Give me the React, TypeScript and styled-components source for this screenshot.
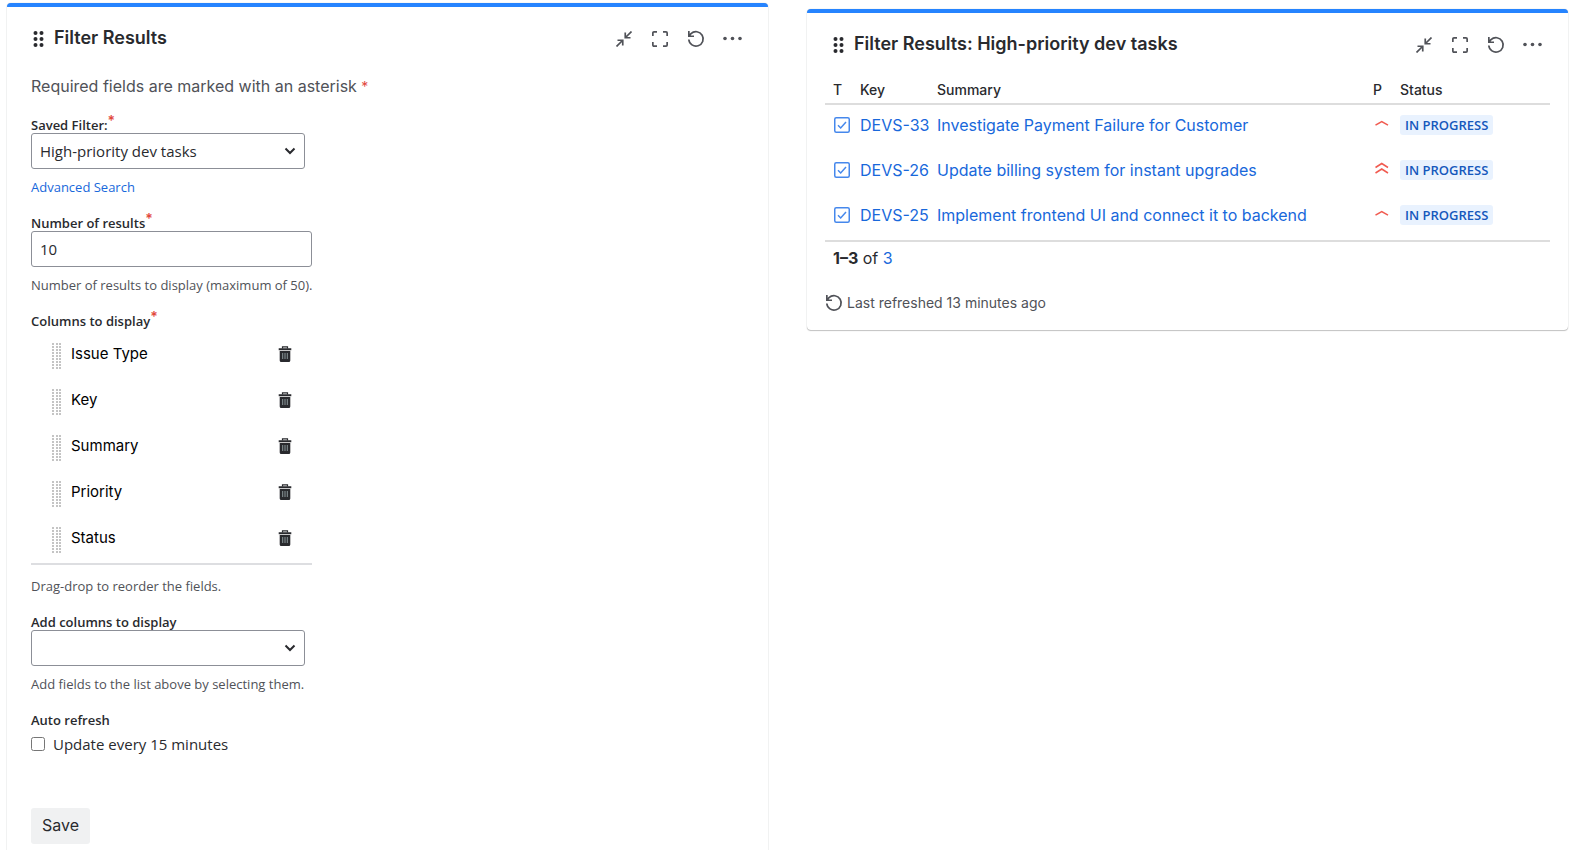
import React from 'react';
import styled, { createGlobalStyle } from 'styled-components';

const ui = `Inter, "Liberation Sans", sans-serif`;
const form = `"Open Sans", "Noto Sans", sans-serif`;

const GlobalStyle = createGlobalStyle`
  *, *::before, *::after { box-sizing: border-box; }
  body { margin: 0; background: #fff; color: #292a2e; font-family: ${ui}; font-size: 16px; line-height: 24px; }
`;

const Board = styled.main`
  display: grid;
  grid-template-columns: 1fr 1fr;
  align-items: start;
  column-gap: 39px;
  padding: 3px 12px 0 7px;
`;

const Gadget = styled.section<{ $drop?: boolean }>`
  margin-top: ${(p) => (p.$drop ? 6 : 0)}px;
  border-top: 4px solid #2684ff;
  border-radius: 4px;
  background: #fff;
  box-shadow: 0 1px 1px rgba(30, 31, 33, 0.25), 0 0 1px rgba(30, 31, 33, 0.31);
`;

const GadgetHeader = styled.header`
  display: flex;
  align-items: center;
  height: 64px;
  padding: 0 24px 0 25px;
`;

const Title = styled.h2`
  flex: 1;
  margin: 0 0 0 8px;
  padding-bottom: 2px;
  font-size: 18px;
  font-weight: 600;
  line-height: 24px;
`;

const Actions = styled.div`
  display: flex;
  gap: 12px;
`;

const IconButton = styled.button`
  display: flex;
  align-items: center;
  justify-content: center;
  width: 24px;
  height: 24px;
  padding: 0;
  border: 0;
  background: none;
  color: #505258;
  cursor: pointer;
`;

const Form = styled.form`
  padding: 3px 24px 24px;
`;

const Intro = styled.p`
  margin: 0 0 16px;
  color: #505258;
`;

const Star = styled.span`
  color: #e2483d;
  font-size: 14px;
`;

const LabelStar = styled(Star)`
  font-family: ${ui};
  line-height: 0;
  vertical-align: 4px;
`;

const Field = styled.div`
  display: flex;
  flex-direction: column;
  align-items: flex-start;
  margin-bottom: 17px;
`;

const Label = styled.label`
  padding-top: 2px;
  font: 600 13px/16px ${form};
`;

const Hint = styled.p`
  margin: 9px 0 0;
  color: #505258;
  font: 13px/18px ${form};
`;

const TextLink = styled.a`
  color: #1868db;
  text-decoration: none;
`;

const SelectBox = styled.span`
  display: grid;
  align-items: center;
  width: 274px;
  & > * { grid-area: 1 / 1; }
  & > svg { justify-self: end; margin-right: 9px; pointer-events: none; }
`;

const Select = styled.select`
  appearance: none;
  width: 100%;
  height: 36px;
  padding: 0 8px;
  border: 1px solid #8c8f97;
  border-radius: 3px;
  background: #fff;
  color: #292a2e;
  font: 15px/24px ${form};
`;

const TextInput = styled.input`
  width: 281px;
  height: 36px;
  padding: 0 8px;
  border: 1px solid #8c8f97;
  border-radius: 3px;
  color: #292a2e;
  font: 15px/24px ${form};
`;

const ColumnList = styled.ul`
  width: 281px;
  margin: 0 0 3px;
  padding: 2px 0;
  border-bottom: 2px solid #dddee1;
  list-style: none;
`;

const ColumnItem = styled.li`
  display: flex;
  align-items: center;
  height: 46px;
  padding: 0 15px 0 21px;
  color: #000;
`;

const ColumnName = styled.span`
  flex: 1;
  margin-left: 10px;
  font-size: 15px;
`;

const CheckRow = styled.label`
  display: flex;
  align-items: center;
  gap: 8px;
  margin-top: 4px;
  font: 15px/24px ${form};
`;

const Checkbox = styled.input`
  width: 14px;
  height: 14px;
  margin: 0;
`;

const SaveButton = styled.button`
  height: 36px;
  margin-top: 35px;
  padding: 0 11px 2px;
  border: 0;
  border-radius: 3px;
  background: #f0f1f2;
  color: #292a2e;
  font: 16px/24px ${ui};
`;

const Results = styled.div`
  padding: 0 18px 15px;
`;

const Table = styled.table`
  width: 100%;
  border-collapse: separate;
  border-spacing: 0;
  border-bottom: 2px solid #dddddd;
  table-layout: fixed;
`;

const Th = styled.th<{ $width?: number }>`
  width: ${(p) => (p.$width ? `${p.$width}px` : 'auto')};
  height: 28px;
  padding: 0 5px;
  border-bottom: 2px solid #dddddd;
  text-align: left;
  font-size: 14px;
  font-weight: 500;
  &:first-child { padding-left: 8px; }
`;

const Td = styled.td`
  height: 45px;
  padding: 0 5px 6px;
  white-space: nowrap;
  &:first-child { padding-left: 9px; }
  & > svg { display: block; }
`;

const Lozenge = styled.span`
  display: block;
  width: fit-content;
  padding: 0 5px;
  border-radius: 3px;
  background: #e9f2fe;
  color: #1558bc;
  font: 600 13px/20px ${form};
`;

const Pager = styled.p`
  margin: 4px 0 0;
  padding: 0 8px;
`;

const Refreshed = styled.p`
  display: flex;
  align-items: center;
  gap: 4px;
  margin: 21px 0 0;
  color: #505258;
  font-size: 14px;
`;

const stroke = { fill: 'none', stroke: 'currentColor', strokeWidth: 1.7 };

const DragDots = () => (
  <svg width="14" height="18" viewBox="0 0 14 18" fill="currentColor" aria-hidden="true">
    {[3, 9, 15].map((y) => [3.5, 9.5].map((x) => <circle key={`${x}-${y}`} cx={x} cy={y} r="2" />))}
  </svg>
);

const CollapseIcon = () => (
  <svg width="16" height="16" viewBox="0 0 16 16" {...stroke}>
    <path d="M15.5 .5 9.5 6.5M9.25 1.5v5.25h5.25M.5 15.5l6-6M1.5 9.25h5.25v5.25" />
  </svg>
);

const ExpandIcon = () => (
  <svg width="16" height="16" viewBox="0 0 16 16" {...stroke}>
    <path d="M.85 5V2Q.85.85 2 .85H5M11 .85h3q1.15 0 1.15 1.15v3M15.15 11v3q0 1.15-1.15 1.15h-3M5 15.15H2Q.85 15.15.85 14v-3" />
  </svg>
);

const RefreshIcon = () => (
  <svg width="18" height="18" viewBox="0 0 18 18" {...stroke}>
    <path d="M1.85 1v5.25H7M1.85 6.25 4 3.7A7.2 7.2 0 1 1 1.8 9.5" />
  </svg>
);

const MoreIcon = () => (
  <svg width="20" height="16" viewBox="0 0 20 16" fill="currentColor">
    <circle cx="3" cy="7.5" r="1.8" />
    <circle cx="10.5" cy="7.5" r="1.8" />
    <circle cx="18" cy="7.5" r="1.8" />
  </svg>
);

const Chevron = () => (
  <svg width="12" height="8" viewBox="0 0 12 8" fill="none" stroke="#292a2e" strokeWidth="2" aria-hidden="true">
    <path d="M1.5 1.5 6 6l4.5-4.5" />
  </svg>
);

/* The handle hangs a little below the middle of its row. */
const Grip = styled(({ className }: { className?: string }) => (
  <svg className={className} width="9" height="27" viewBox="0 0 9 27" fill="#c4c4c4" aria-hidden="true">
    {[0, 3, 6, 9, 12, 15, 18, 21, 24].map((y) => [0, 4, 7].map((x) => <rect key={`${x}-${y}`} x={x} y={y} width="2" height="2" />))}
  </svg>
))`
  margin-top: 4px;
`;

const TrashIcon = () => (
  <svg width="14" height="16" viewBox="0 0 14 16">
    <path d="M4.5 2.5V.9h5v1.6" fill="none" stroke="#292a2e" strokeWidth="1.2" />
    <path d="M.7 2.3h12.6v2H.7zM1.7 5h10.6v9.5q0 1.5-1.5 1.5H3.2Q1.7 16 1.7 14.5z" fill="#292a2e" />
    <path d="M4.7 7v6M7 7v6M9.3 7v6" stroke="#8a9699" strokeWidth="1" />
  </svg>
);

const TaskIcon = () => (
  <svg width="16" height="16" viewBox="0 0 16 16" fill="none" stroke="#4688ec" strokeWidth="1.5" role="img" aria-label="Task">
    <rect x=".75" y=".75" width="14.5" height="14.5" rx="1.5" />
    <path d="m4 8.3 2.7 2.7L12 5" />
  </svg>
);

const PriorityIcon = ({ highest }: { highest?: boolean }) => (
  <svg width="17" height="16" viewBox="0 0 17 16" fill="none" stroke="#f15b50" strokeWidth="1.5" role="img" aria-label={highest ? 'Highest' : 'High'}>
    {highest ? <path d="m2.5 5.5 6.25-4 6.25 4M2.5 11l6.25-4L15 11" /> : <path d="m2.5 8.2 6.25-3.7L15 8.2" />}
  </svg>
);

const columns = ['Issue Type', 'Key', 'Summary', 'Priority', 'Status'];

const issues = [
  { key: 'DEVS-33', summary: 'Investigate Payment Failure for Customer', highest: false },
  { key: 'DEVS-26', summary: 'Update billing system for instant upgrades', highest: true },
  { key: 'DEVS-25', summary: 'Implement frontend UI and connect it to backend', highest: false },
];

const Header = ({ title }: { title: string }) => (
  <GadgetHeader>
    <DragDots />
    <Title>{title}</Title>
    <Actions>
      <IconButton aria-label="Minimize"><CollapseIcon /></IconButton>
      <IconButton aria-label="Maximize"><ExpandIcon /></IconButton>
      <IconButton aria-label="Refresh"><RefreshIcon /></IconButton>
      <IconButton aria-label="More actions"><MoreIcon /></IconButton>
    </Actions>
  </GadgetHeader>
);

export default function App() {
  return (
    <>
      <GlobalStyle />
      <Board>
        <Gadget>
          <Header title="Filter Results" />
          <Form onSubmit={(e) => e.preventDefault()}>
            <Intro>Required fields are marked with an asterisk <Star>*</Star></Intro>
            <Field>
              <Label htmlFor="filter">Saved Filter:<LabelStar>*</LabelStar></Label>
              <SelectBox>
                <Select id="filter"><option>High-priority dev tasks</option></Select>
                <Chevron />
              </SelectBox>
              <Hint><TextLink href="#search">Advanced Search</TextLink></Hint>
            </Field>
            <Field>
              <Label htmlFor="count">Number of results<LabelStar>*</LabelStar></Label>
              <TextInput id="count" defaultValue="10" />
              <Hint>Number of results to display (maximum of 50).</Hint>
            </Field>
            <Field>
              <Label as="span" id="columns">Columns to display<LabelStar>*</LabelStar></Label>
              <ColumnList aria-labelledby="columns">
                {columns.map((name) => (
                  <ColumnItem key={name}>
                    <Grip />
                    <ColumnName>{name}</ColumnName>
                    <IconButton type="button" aria-label={`Remove ${name}`}><TrashIcon /></IconButton>
                  </ColumnItem>
                ))}
              </ColumnList>
              <Hint>Drag-drop to reorder the fields.</Hint>
            </Field>
            <Field>
              <Label htmlFor="add">Add columns to display</Label>
              <SelectBox>
                <Select id="add" defaultValue=""><option value="" /></Select>
                <Chevron />
              </SelectBox>
              <Hint>Add fields to the list above by selecting them.</Hint>
            </Field>
            <Field>
              <Label as="span">Auto refresh</Label>
              <CheckRow><Checkbox type="checkbox" />Update every 15 minutes</CheckRow>
            </Field>
            <SaveButton>Save</SaveButton>
          </Form>
        </Gadget>

        <Gadget $drop>
          <Header title="Filter Results: High-priority dev tasks" />
          <Results>
            <Table>
              <thead>
                <tr>
                  <Th $width={30}>T</Th>
                  <Th $width={77}>Key</Th>
                  <Th>Summary</Th>
                  <Th $width={27}>P</Th>
                  <Th $width={155}>Status</Th>
                </tr>
              </thead>
              <tbody>
                {issues.map((issue) => (
                  <tr key={issue.key}>
                    <Td><TaskIcon /></Td>
                    <Td><TextLink href={`#${issue.key}`}>{issue.key}</TextLink></Td>
                    <Td><TextLink href={`#${issue.key}`}>{issue.summary}</TextLink></Td>
                    <Td><PriorityIcon highest={issue.highest} /></Td>
                    <Td><Lozenge>IN PROGRESS</Lozenge></Td>
                  </tr>
                ))}
              </tbody>
            </Table>
            <Pager><b>1–3</b> of <TextLink href="#all">3</TextLink></Pager>
            <Refreshed><RefreshIcon />Last refreshed 13 minutes ago</Refreshed>
          </Results>
        </Gadget>
      </Board>
    </>
  );
}
